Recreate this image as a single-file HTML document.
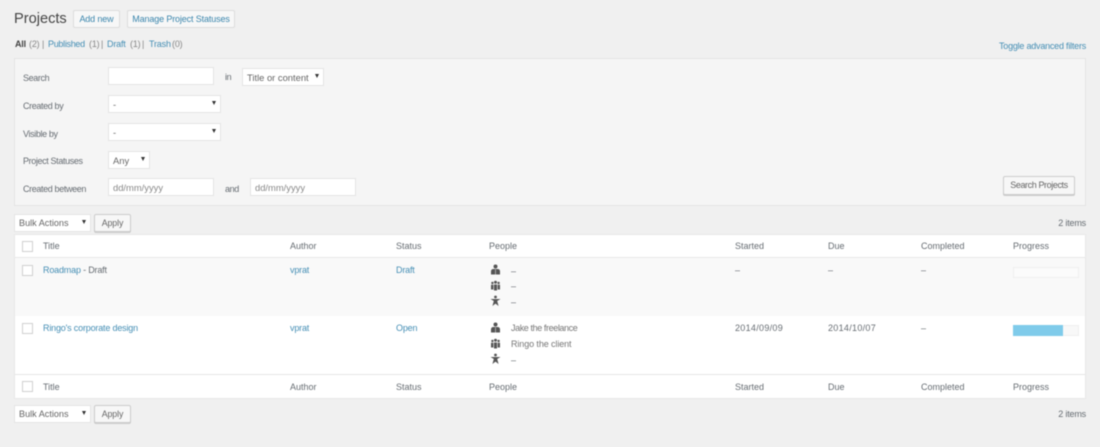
<!DOCTYPE html>
<html><head><meta charset="utf-8">
<style>
html,body{margin:0;padding:0;width:1100px;height:447px;overflow:hidden;background:#f0f0f0;}
#w{position:absolute;left:0;top:0;width:1100px;height:447px;background:#f0f0f0;filter:blur(.45px);font-family:"Liberation Sans",sans-serif;font-size:9px;letter-spacing:-.18px;color:#666c72;}
.t{position:absolute;white-space:nowrap;line-height:12px;height:12px;}
.h{font-size:9px;letter-spacing:0;}
.f{font-size:9px;letter-spacing:-.37px;}
.b{position:absolute;box-sizing:border-box;}
.l{color:#468fb5;}
.btn{position:absolute;box-sizing:border-box;background:#f7f7f7;border:1px solid #ccc;border-radius:2px;box-shadow:0 1px 0 #ccc;color:#666;text-align:center;font-size:8.8px;letter-spacing:-.1px;}
.pb{position:absolute;box-sizing:border-box;background:#f7f7f7;border:1px solid #dcdcdc;border-radius:2px;color:#3b86ad;text-align:center;font-size:9px;letter-spacing:-.13px;line-height:16px;height:18px;}
.inp{position:absolute;box-sizing:border-box;background:#fff;border:1px solid #e4e4e4;height:18px;color:#666;font-size:9.4px;letter-spacing:0;line-height:17px;padding-left:4px;}
.inp i{position:absolute;right:4px;top:5px;width:0;height:0;border-left:2.5px solid transparent;border-right:2.5px solid transparent;border-top:4px solid #333;}
.cb{position:absolute;box-sizing:border-box;width:11px;height:11px;background:#fff;border:1px solid #d0d0d0;}
svg{position:absolute;}
</style></head><body><div id="w">
<div class="t" style="left:14px;top:10px;font-size:14.6px;letter-spacing:0;line-height:18px;height:18px;color:#444;">Projects</div>
<div class="pb" style="left:73px;top:10px;width:47px;">Add new</div>
<div class="pb" style="left:127px;top:10px;width:108px;">Manage Project Statuses</div>

<div class="t" style="left:15px;top:38px;color:#444;font-weight:bold;letter-spacing:-.2px;">All</div>
<div class="t" style="left:29px;top:38px;color:#888;">(2)</div><div class="t" style="left:42px;top:38px;color:#888;">|</div>
<div class="t l" style="left:48px;top:38px;letter-spacing:-.3px;">Published</div>
<div class="t" style="left:89px;top:38px;color:#888;">(1)</div><div class="t" style="left:101px;top:38px;color:#888;">|</div>
<div class="t l" style="left:107px;top:38px;">Draft</div>
<div class="t" style="left:130px;top:38px;color:#888;">(1)</div><div class="t" style="left:142px;top:38px;color:#888;">|</div>
<div class="t l" style="left:149px;top:38px;">Trash</div>
<div class="t" style="left:172px;top:38px;color:#888;">(0)</div>
<div class="t l" style="right:14px;top:40px;letter-spacing:-.22px;">Toggle advanced filters</div>

<div class="b" style="left:14px;top:58px;width:1072px;height:148px;background:#f5f5f5;border:1px solid #e4e4e4;"></div>
<div class="t f" style="left:23px;top:72px;">Search</div>
<div class="inp" style="left:108px;top:67px;width:106px;"></div>
<div class="t f" style="left:225px;top:71px;">in</div>
<div class="inp" style="left:242px;top:68px;width:82px;">Title or content<i></i></div>
<div class="t f" style="left:23px;top:100px;">Created by</div>
<div class="inp" style="left:108px;top:95px;width:113px;">-<i></i></div>
<div class="t f" style="left:23px;top:128px;">Visible by</div>
<div class="inp" style="left:108px;top:123px;width:113px;">-<i></i></div>
<div class="t f" style="left:23px;top:155px;">Project Statuses</div>
<div class="inp" style="left:108px;top:151px;width:42px;">Any<i></i></div>
<div class="t f" style="left:23px;top:183px;">Created between</div>
<div class="inp" style="left:108px;top:178px;width:106px;color:#888;">dd/mm/yyyy</div>
<div class="t f" style="left:225px;top:183px;">and</div>
<div class="inp" style="left:250px;top:178px;width:106px;color:#888;">dd/mm/yyyy</div>
<div class="btn" style="left:1003px;top:176px;width:72px;height:19px;line-height:17px;font-size:9px;letter-spacing:-.4px;">Search Projects</div>

<div class="inp" style="left:14px;top:214px;width:77px;font-size:9.1px;">Bulk Actions<i></i></div>
<div class="btn" style="left:94px;top:214px;width:37px;height:18px;line-height:16px;">Apply</div>
<div class="t" style="right:14px;top:217px;">2 items</div>

<div class="b" style="left:14px;top:234px;width:1072px;height:165px;background:#fff;border:1px solid #e8e8e8;"></div>
<div class="b" style="left:15px;top:257px;width:1070px;height:1px;background:#e8e8e8;"></div>
<div class="b" style="left:15px;top:258px;width:1070px;height:58px;background:#f9f9f9;"></div>
<div class="b" style="left:15px;top:374px;width:1070px;height:1px;background:#e5e5e5;"></div>

<div class="cb" style="left:22px;top:241px;"></div>
<div class="t h" style="left:43px;top:240px;">Title</div>
<div class="t h" style="left:290px;top:240px;">Author</div>
<div class="t h" style="left:396px;top:240px;">Status</div>
<div class="t h" style="left:489px;top:240px;">People</div>
<div class="t h" style="left:735px;top:240px;">Started</div>
<div class="t h" style="left:828px;top:240px;">Due</div>
<div class="t h" style="left:921px;top:240px;">Completed</div>
<div class="t h" style="left:1013px;top:240px;">Progress</div>

<div class="cb" style="left:22px;top:265px;"></div>
<div class="t" style="left:43px;top:264px;"><span class="l">Roadmap</span> - Draft</div>
<div class="t l" style="left:290px;top:264px;">vprat</div>
<div class="t l" style="left:396px;top:264px;">Draft</div>
<div class="t" style="left:511px;top:265px;">–</div>
<div class="t" style="left:511px;top:280px;">–</div>
<div class="t" style="left:511px;top:296px;">–</div>
<div class="t" style="left:735px;top:264px;">–</div>
<div class="t" style="left:828px;top:264px;">–</div>
<div class="t" style="left:921px;top:264px;">–</div>
<div class="b" style="left:1013px;top:267px;width:66px;height:11px;background:#fbfbfb;border:1px solid #efefef;"></div>

<svg style="left:490px;top:264px" width="11" height="44" viewBox="0 0 11 44" fill="#555">
<circle cx="5.5" cy="2.5" r="2"/><path d="M1 10.5V7.5Q1 5 3.5 5H7.5Q10 5 10 7.5V10.5Z"/><path d="M5.5 5.5V10.5" stroke="#ddd" stroke-width=".6"/>
<circle cx="5.5" cy="18.2" r="1.5"/><circle cx="2.4" cy="19" r="1.2"/><circle cx="8.6" cy="19" r="1.2"/><path d="M4 20.5H7V26.5H4ZM1 20.8H3.4V25.5H1ZM7.6 20.8H10V25.5H7.6Z"/>
<circle cx="5.5" cy="33" r="1.4"/><path d="M.5 35L10.5 35 7.2 37 8.6 42 5.5 39.6 2.4 42 3.8 37Z"/>
</svg>

<div class="cb" style="left:22px;top:323px;"></div>
<div class="t l" style="left:43px;top:322px;">Ringo's corporate design</div>
<div class="t l" style="left:290px;top:322px;">vprat</div>
<div class="t l" style="left:396px;top:322px;">Open</div>
<div class="t" style="left:511px;top:322px;letter-spacing:-.4px;color:#777;">Jake the freelance</div>
<div class="t" style="left:511px;top:338px;letter-spacing:-.1px;color:#777;">Ringo the client</div>
<div class="t" style="left:511px;top:354px;">–</div>
<div class="t" style="left:735px;top:322px;letter-spacing:.3px;">2014/09/09</div>
<div class="t" style="left:828px;top:322px;letter-spacing:.3px;">2014/10/07</div>
<div class="t" style="left:921px;top:322px;">–</div>
<div class="b" style="left:1013px;top:325px;width:66px;height:11px;background:#f8f8f8;border:1px solid #efefef;"></div>
<div class="b" style="left:1013px;top:325px;width:50px;height:11px;background:#7fcbea;"></div>

<svg style="left:490px;top:322px" width="11" height="44" viewBox="0 0 11 44" fill="#555">
<circle cx="5.5" cy="2.5" r="2"/><path d="M1 10.5V7.5Q1 5 3.5 5H7.5Q10 5 10 7.5V10.5Z"/><path d="M5.5 5.5V10.5" stroke="#ddd" stroke-width=".6"/>
<circle cx="5.5" cy="18.2" r="1.5"/><circle cx="2.4" cy="19" r="1.2"/><circle cx="8.6" cy="19" r="1.2"/><path d="M4 20.5H7V26.5H4ZM1 20.8H3.4V25.5H1ZM7.6 20.8H10V25.5H7.6Z"/>
<circle cx="5.5" cy="33" r="1.4"/><path d="M.5 35L10.5 35 7.2 37 8.6 42 5.5 39.6 2.4 42 3.8 37Z"/>
</svg>

<div class="cb" style="left:22px;top:381px;"></div>
<div class="t h" style="left:43px;top:381px;">Title</div>
<div class="t h" style="left:290px;top:381px;">Author</div>
<div class="t h" style="left:396px;top:381px;">Status</div>
<div class="t h" style="left:489px;top:381px;">People</div>
<div class="t h" style="left:735px;top:381px;">Started</div>
<div class="t h" style="left:828px;top:381px;">Due</div>
<div class="t h" style="left:921px;top:381px;">Completed</div>
<div class="t h" style="left:1013px;top:381px;">Progress</div>

<div class="inp" style="left:14px;top:405px;width:77px;font-size:9.1px;">Bulk Actions<i></i></div>
<div class="btn" style="left:94px;top:405px;width:37px;height:18px;line-height:16px;">Apply</div>
<div class="t" style="right:14px;top:408px;">2 items</div>
</div></body></html>
